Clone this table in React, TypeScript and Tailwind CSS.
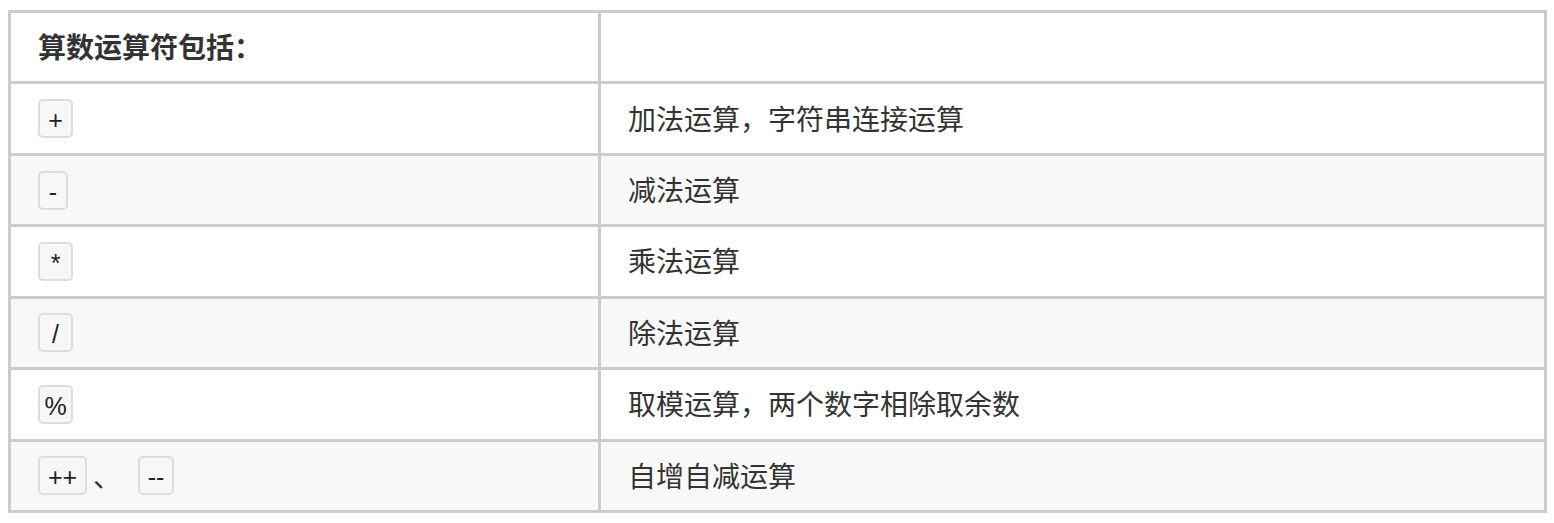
import React from "react";

type Op = { sym: string; w: string };
type Row = { ops: Op[]; desc: string };

const rows: Row[] = [
  { ops: [{ sym: "+", w: "w-[35px]" }], desc: "加法运算，字符串连接运算" },
  { ops: [{ sym: "-", w: "w-[30px]" }], desc: "减法运算" },
  { ops: [{ sym: "*", w: "w-[35px]" }], desc: "乘法运算" },
  { ops: [{ sym: "/", w: "w-[35px]" }], desc: "除法运算" },
  { ops: [{ sym: "%", w: "w-[35px]" }], desc: "取模运算，两个数字相除取余数" },
  {
    ops: [
      { sym: "++", w: "w-[49px]" },
      { sym: "--", w: "w-[36px]" },
    ],
    desc: "自增自减运算",
  },
];

const Code = ({ children, className = "" }: { children: React.ReactNode; className?: string }) => (
  <code
    className={`inline-block h-[39px] pt-[4px] border-2 border-[#dddddd] rounded-[5px] bg-[#f7f7f7] text-[#222222] text-[25px] leading-[31px] text-center align-middle ${className}`}
    style={{ fontFamily: '"Liberation Sans", Arial, sans-serif' }}
  >
    {children}
  </code>
);

const cell = "h-[71.43px] flex items-center px-[27px] border-r-[3px] border-b-[3px] border-[#cccccc]";

export default function App() {
  return (
    <div
      className="min-h-screen bg-white pt-[10px] pl-[8px] text-[#333333]"
      style={{ fontFamily: '"Noto Sans", "Noto Sans CJK SC", sans-serif' }}
    >
      <div className="w-[1539px] border-l-[3px] border-t-[3px] border-[#cccccc] grid grid-cols-[590px_946px]">
        {/* Header */}
        <div className={`${cell} bg-white text-[28px] font-bold`}>算数运算符包括：</div>
        <div className={`${cell} bg-white`} />

        {rows.map((r, i) => {
          const bg = i % 2 === 1 ? "bg-[#f8f8f8]" : "bg-white";
          return (
            <React.Fragment key={i}>
              <div className={`${cell} ${bg}`}>
                <Code className={r.ops[0].w}>{r.ops[0].sym}</Code>
                {r.ops.length > 1 && (
                  <>
                    <span className="text-[28px] ml-[6px] leading-none">、</span>
                    <Code className={`ml-[17px] ${r.ops[1].w}`}>{r.ops[1].sym}</Code>
                  </>
                )}
              </div>
              <div className={`${cell} ${bg} text-[28px]`}>{r.desc}</div>
            </React.Fragment>
          );
        })}
      </div>
    </div>
  );
}
